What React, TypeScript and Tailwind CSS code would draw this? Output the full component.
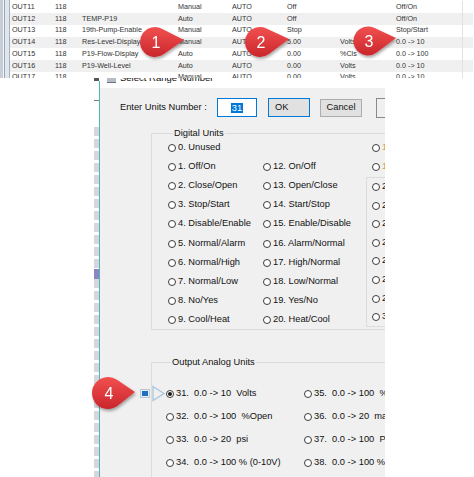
import React from "react"

const rows = [
  ["OUT11", "118", "", "Manual", "AUTO", "Off", "", "Off/On"],
  ["OUT12", "118", "TEMP-P19", "Auto", "AUTO", "Off", "", "Off/On"],
  ["OUT13", "118", "19th-Pump-Enable", "Manual", "AUTO", "Stop", "", "Stop/Start"],
  ["OUT14", "118", "Res-Level-Display", "Manual", "AUTO", "5.00", "Volts", "0.0 -> 10"],
  ["OUT15", "118", "P19-Flow-Display", "Auto", "AUTO", "0.00", "%Cls", "0.0 -> 100"],
  ["OUT16", "118", "P19-Well-Level", "Auto", "AUTO", "0.00", "Volts", "0.0 -> 10"],
  ["OUT17", "118", "", "Manual", "AUTO", "0.00", "Volts", "0.0 -> 10"],
]

const colWidths = ["w-[45px] pl-[2px]", "w-[27px]", "w-[96px]", "w-[54px]", "w-[55px]", "w-[53px]", "w-[56px]", "w-[67px]"]

const digital1 = ["0. Unused", "1. Off/On", "2. Close/Open", "3. Stop/Start", "4. Disable/Enable", "5. Normal/Alarm", "6. Normal/High", "7. Normal/Low", "8. No/Yes", "9. Cool/Heat"]
const digital2 = ["12. On/Off", "13. Open/Close", "14. Start/Stop", "15. Enable/Disable", "16. Alarm/Normal", "17. High/Normal", "18. Low/Normal", "19. Yes/No", "20. Heat/Cool"]
const digital3 = ["21. Custom", "22. Custom", "23. Custom", "24. Custom", "25. Custom", "26. Custom", "27. Custom", "30. Custom"]

const analog1 = ["31.  0.0 -> 10  Volts", "32.  0.0 -> 100  %Open", "33.  0.0 -> 20  psi", "34.  0.0 -> 100 % (0-10V)"]
const analog2 = ["35.  0.0 -> 100  %Closed", "36.  0.0 -> 20  ma", "37.  0.0 -> 100  PWM", "38.  0.0 -> 100 % (4-20mA)"]

function Radio({ checked }: { checked?: boolean }) {
  return (
    <span className="w-[8px] h-[8px] rounded-full border border-[#3c3c3c] bg-white flex items-center justify-center shrink-0">
      {checked && <span className="w-[4px] h-[4px] rounded-full bg-[#1a1a1a]" />}
    </span>
  )
}

function Item({ text, checked, h, color }: { text: string; checked?: boolean; h: string; color?: string }) {
  return (
    <div className={`${h} flex items-center gap-[2px] whitespace-pre`}>
      <Radio checked={checked} />
      <span className={color ?? ""}>{text}</span>
    </div>
  )
}

function calloutPath(cx: number, cy: number, r: number, tx: number, ty: number) {
  const dx = tx - cx
  const dy = ty - cy
  const L = Math.sqrt(dx * dx + dy * dy)
  const phi = Math.atan2(dy, dx)
  const th = Math.acos(r / L)
  const p1 = [cx + r * Math.cos(phi - th), cy + r * Math.sin(phi - th)]
  const p2 = [cx + r * Math.cos(phi + th), cy + r * Math.sin(phi + th)]
  return `M ${tx} ${ty} L ${p1[0]} ${p1[1]} A ${r} ${r} 0 1 0 ${p2[0]} ${p2[1]} Z`
}

const callouts = [
  { cx: 155, cy: 42, r: 15, tx: 184, ty: 40, n: "1" },
  { cx: 260, cy: 42, r: 15, tx: 289, ty: 39, n: "2" },
  { cx: 368, cy: 41, r: 14.5, tx: 396, ty: 38, n: "3" },
  { cx: 108, cy: 393, r: 16, tx: 135, ty: 392, n: "4" },
]

export default function App() {
  return (
    <div className="relative w-[474px] h-[477px] overflow-hidden bg-white font-['Liberation_Sans',Arial,sans-serif]">

      {/* grid above the dialog */}
      <div className="h-[78px] overflow-hidden flex bg-white">
        <div className="flex shrink-0">
          <div className="w-[3px] bg-[#c9ced6]" />
          <div className="w-[1px] bg-[#f4f6f8]" />
          <div className="w-[1px] bg-[#98a8bc]" />
          <div className="w-[4px] bg-[#dfe6ee]" />
          <div className="w-[1px] bg-[#a8b0bc]" />
        </div>
        <div className="pt-[1.3px] text-[7.2px] text-[#333]">
          {rows.map((r, i) => (
            <div key={r[0]} className={`h-[11.75px] flex items-center ${i % 2 === 1 ? "bg-[#f0f0f0]" : "bg-white"}`}>
              {r.map((c, j) => (
                <div key={j} className={`${colWidths[j]} shrink-0 whitespace-pre ${j === 7 ? "h-full flex items-center border-r border-[#e2e2e2]" : ""}`}>
                  {c}
                </div>
              ))}
              <div className="w-[10px]" />
            </div>
          ))}
        </div>
      </div>

      {/* dialog row */}
      <div className="flex h-[399px]">
        <div className="w-[94px] shrink-0" />

        <div className="w-[5px] shrink-0 flex flex-col">
          <div className="h-[3px] bg-[#555]" />
          <div className="h-[19px]" />
          <div className="h-[1px] bg-[#777]" />
          <div className="h-[26px]" />
          <div className="h-[142px] bg-[repeating-linear-gradient(to_bottom,#d6d6de_0px,#d6d6de_9px,transparent_9px,transparent_12px)]" />
          <div className="h-[10px] bg-[#8a86c2]" />
          <div className="flex-1 bg-[repeating-linear-gradient(to_bottom,#d6d6de_0px,#d6d6de_9px,transparent_9px,transparent_12px)]" />
        </div>

        <div className="w-[1px] shrink-0 mt-[3px] bg-[#52b6b8]" />

        <div className="w-[285px] shrink-0 overflow-hidden flex flex-col text-[9.3px] text-[#111]">
          <div className="h-[10px] bg-white overflow-hidden flex items-start pl-[7px]">
            <div className="w-[9px] h-[5px] bg-[#b8bcc4] border-b border-[#6a7080] shrink-0" />
            <span className="ml-[4px] -mt-[5px] leading-[10px] whitespace-nowrap text-[9.5px]">Select Range Number</span>
          </div>

          <div className="flex-1 bg-[#f0f0f0] flex flex-col">
            <div className="mt-[10px] h-[19px] flex items-center whitespace-nowrap">
              <span className="pl-[20px] w-[117px] shrink-0">Enter Units Number :</span>
              <div className="w-[40px] h-[19px] shrink-0 border border-[#0078d7] bg-white flex items-center justify-center">
                <span className="bg-[#0078d7] text-white px-[1px] leading-[10px]">31</span>
              </div>
              <div className="ml-[11px] w-[42px] h-[19px] shrink-0 border border-[#0078d7] bg-[#e1e1e1] flex items-center pl-[6px]">OK</div>
              <div className="ml-[10px] w-[42px] h-[18px] shrink-0 border border-[#adadad] bg-[#e1e1e1] flex items-center justify-center">Cancel</div>
              <div className="ml-[14px] w-[30px] h-[20px] shrink-0 border border-[#8a8a8a]" />
            </div>

            <fieldset className="ml-[51px] mt-[10.5px] w-[300px] shrink-0 border border-[#dcdcdc] pl-[16px]">
              <legend className="ml-[5px] px-[1px] leading-[11px]">Digital Units</legend>
              <div className="flex">
                <div className="w-[95px] shrink-0">
                  {digital1.map((t) => <Item key={t} text={t} h="h-[19.1px]" />)}
                </div>
                <div className="w-[103px] shrink-0">
                  <div className="h-[19.1px]" />
                  {digital2.map((t) => <Item key={t} text={t} h="h-[19.1px]" />)}
                </div>
                <div className="flex-1">
                  <div className="pl-[6px]">
                    <Item text="10. Spare" h="h-[19.1px]" color="text-[#d99a3a]" />
                    <Item text="11. Spare" h="h-[19.1px]" color="text-[#d99a3a]" />
                  </div>
                  <div className="border-l border-t border-b border-[#dcdcdc] pl-[5px]">
                    {digital3.map((t) => <Item key={t} text={t} h="h-[18.6px]" />)}
                  </div>
                </div>
              </div>
            </fieldset>

            <fieldset className="ml-[51px] mt-[27px] w-[300px] flex-1 border border-b-0 border-[#dcdcdc] pl-[14px] pt-[14px]">
              <legend className="ml-[5px] px-[1px] leading-[11px]">Output Analog Units</legend>
              <div className="flex">
                <div className="w-[138px] shrink-0">
                  {analog1.map((t, i) => <Item key={t} text={t} checked={i === 0} h="h-[23px]" />)}
                </div>
                <div className="flex-1">
                  {analog2.map((t) => <Item key={t} text={t} h="h-[23px]" />)}
                </div>
              </div>
            </fieldset>
          </div>
        </div>

        <div className="flex-1" />
      </div>

      {/* callout markers laid over the screenshot */}
      <svg className="absolute inset-0 pointer-events-none" width="474" height="477" viewBox="0 0 474 477">
        <defs>
          <linearGradient id="red" x1="0" y1="0" x2="0" y2="1">
            <stop offset="0" stopColor="#f25050" />
            <stop offset="1" stopColor="#c9262c" />
          </linearGradient>
          <filter id="sh" x="-30%" y="-30%" width="160%" height="170%">
            <feDropShadow dx="1" dy="2" stdDeviation="1.6" floodColor="#000" floodOpacity="0.35" />
          </filter>
        </defs>

        <rect x="140.5" y="389.5" width="9" height="8" fill="#e4ecf4" stroke="#b8c8d8" />
        <rect x="142" y="391" width="6" height="5" fill="#1e6fbe" />
        <path d="M 153 386.5 L 164 393.5 L 153 400.5 Z" fill="none" stroke="#a9c6de" strokeWidth="1.3" />

        {callouts.map((c) => (
          <g key={c.n} filter="url(#sh)">
            <path d={calloutPath(c.cx, c.cy, c.r, c.tx, c.ty)} fill="url(#red)" />
            <text x={c.cx + 1} y={c.cy + 5.5} textAnchor="middle" fill="#fff" fontSize="16" fontFamily="Liberation Sans, Arial, sans-serif">
              {c.n}
            </text>
          </g>
        ))}
      </svg>
    </div>
  )
}
